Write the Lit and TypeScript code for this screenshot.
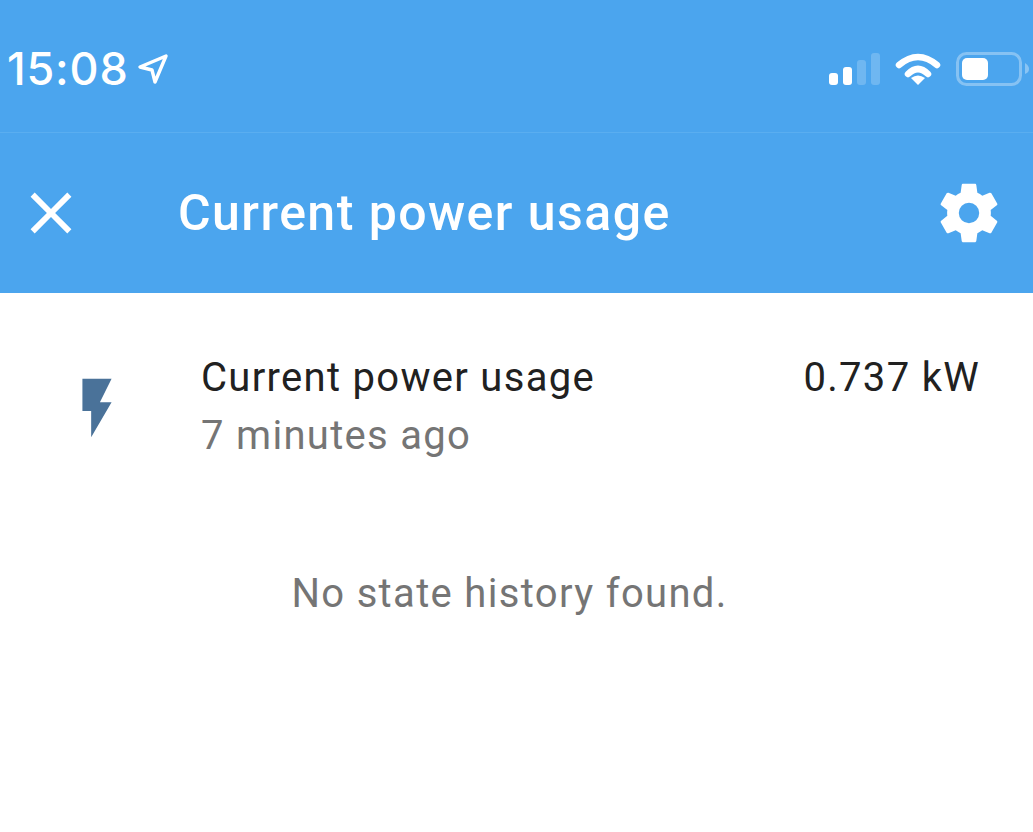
import { LitElement, html, css } from "lit";
import { customElement } from "lit/decorators.js";

@customElement("app-root")
export class AppRoot extends LitElement {
  static styles = css`
    :host { display: block; width: 1033px; height: 832px; background: #fff; overflow: hidden; font-family: Roboto, sans-serif; }
    .status { height: 132px; background: #4ba5ee; border-bottom: 1px solid #5aaef0; display: flex; align-items: center; justify-content: space-between; box-sizing: content-box; }
    .left { display: flex; align-items: center; padding-left: 7px; gap: 8px; margin-top: 6px; }
    .time { font: 500 45px/54px "Inter", sans-serif; color: #fff; letter-spacing: 0.8px; }
    .right { display: flex; align-items: center; margin-top: 6px; }
    .toolbar { height: 160px; background: #4ba5ee; display: flex; align-items: center; color: #fff; }
    .close { margin-left: 16px; width: 70px; height: 70px; }
    .title { margin-left: 92px; flex: 1; font-size: 50px; font-weight: 500; letter-spacing: 1.45px; line-height: 60px; }
    .gear { margin-right: 29px; width: 70px; height: 70px; }
    svg { display: block; fill: currentColor; }
    .row { display: flex; padding: 56px 53px 0 62px; }
    .flash { width: 70px; height: 70px; color: #4a7299; margin-top: 24px; }
    .names { flex: 1; margin-left: 69px; }
    .name, .ago, .value { font-size: 40px; line-height: 58px; letter-spacing: 1.3px; }
    .name, .value { color: #212121; }
    .ago { color: #757575; }
    .empty { text-align: center; margin: 100px 14px 0 0; font-size: 40px; line-height: 58px; color: #757575; letter-spacing: 1.33px; }
  `;

  render() {
    return html`
      <div class="status">
        <div class="left">
          <span class="time">15:08</span>
          <svg width="32" height="32" viewBox="0 0 32 32" style="fill:none"><path d="M3 14 29 3 18 29 15 17Z" fill="none" stroke="#fff" stroke-width="3.4" stroke-linejoin="round"/></svg>
        </div>
        <div class="right">
          <svg width="213" height="38" viewBox="0 0 213 38" style="fill:none">
            <rect x="9" y="23" width="9" height="12" rx="3" fill="#fff"/>
            <rect x="23" y="17" width="9" height="18" rx="3" fill="#fff"/>
            <rect x="37" y="10" width="9" height="25" rx="3" fill="#fff" opacity=".2"/>
            <rect x="51" y="3" width="9" height="32" rx="3" fill="#fff" opacity=".2"/>
            <path d="M79 15 Q98 -1 117 15" fill="none" stroke="#fff" stroke-width="6.5" stroke-linecap="round"/>
            <path d="M88 24 Q98 14 108 24" fill="none" stroke="#fff" stroke-width="6.5" stroke-linecap="round"/>
            <path d="M91 28 Q98 23 105 28 L98 35Z" fill="#fff"/>
            <rect x="137.500" y="3.500" width="63" height="31" rx="9" fill="none" stroke="#fff" stroke-opacity=".33" stroke-width="3"/>
            <rect x="142" y="8" width="26" height="22" rx="5" fill="#fff"/>
            <path d="M205 13C208 15 209 17 209 19S208 23 205 24Z" fill="#fff" opacity=".35"/>
          </svg>
        </div>
      </div>
      <div class="toolbar">
        <svg class="close" viewBox="0 0 24 24"><path d="M19,6.41L17.59,5L12,10.59L6.41,5L5,6.41L10.59,12L5,17.59L6.41,19L12,13.41L17.59,19L19,17.59L13.41,12L19,6.41Z"/></svg>
        <div class="title">Current power usage</div>
        <svg class="gear" viewBox="0 0 24 24"><path d="M12,15.5A3.5,3.5 0 0,1 8.5,12A3.5,3.5 0 0,1 12,8.5A3.5,3.5 0 0,1 15.5,12A3.5,3.5 0 0,1 12,15.5M19.43,12.97C19.47,12.65 19.5,12.33 19.5,12C19.5,11.67 19.47,11.34 19.43,11L21.54,9.37C21.73,9.22 21.78,8.95 21.66,8.73L19.66,5.27C19.54,5.05 19.27,4.96 19.05,5.05L16.56,6.05C16.04,5.66 15.5,5.32 14.87,5.07L14.5,2.42C14.46,2.18 14.25,2 14,2H10C9.75,2 9.54,2.18 9.5,2.42L9.13,5.07C8.5,5.32 7.96,5.66 7.44,6.05L4.95,5.05C4.73,4.96 4.46,5.05 4.34,5.27L2.34,8.73C2.21,8.95 2.27,9.22 2.46,9.37L4.57,11C4.53,11.34 4.5,11.67 4.5,12C4.5,12.33 4.53,12.65 4.57,12.97L2.46,14.63C2.27,14.78 2.21,15.05 2.34,15.27L4.34,18.73C4.46,18.95 4.73,19.03 4.95,18.95L7.44,17.94C7.96,18.34 8.5,18.68 9.13,18.93L9.5,21.58C9.54,21.82 9.75,22 10,22H14C14.25,22 14.46,21.82 14.5,21.58L14.87,18.93C15.5,18.67 16.04,18.34 16.56,17.94L19.05,18.95C19.27,19.03 19.54,18.95 19.66,18.73L21.66,15.27C21.78,15.05 21.73,14.78 21.54,14.63L19.43,12.97Z"/></svg>
      </div>
      <div class="row">
        <svg class="flash" viewBox="0 0 24 24"><path d="M7,2V13H10V22L17,10H13L17,2H7Z"/></svg>
        <div class="names">
          <div class="name">Current power usage</div>
          <div class="ago">7 minutes ago</div>
        </div>
        <div class="value">0.737 kW</div>
      </div>
      <div class="empty">No state history found.</div>
    `;
  }
}
